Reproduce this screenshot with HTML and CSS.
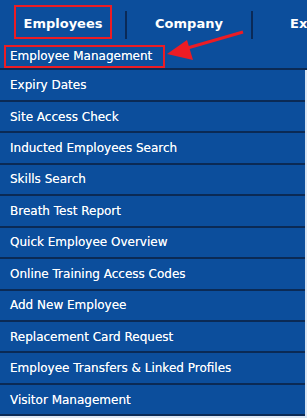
FILE: index.html
```html
<!DOCTYPE html>
<html lang="en">
  <head>
    <meta charset="UTF-8" />
    <meta name="viewport" content="width=device-width, initial-scale=1.0" />
    <title>Employees Menu</title>
    <link rel="stylesheet" href="styles.css">
  </head>
  <body>
    <div class="page">
      <nav class="top-nav">
        <div class="nav-item first active"><span class="nav-label">Employees</span></div>
        <div class="nav-sep"></div>
        <div class="nav-item"><span class="nav-label">Company</span></div>
        <div class="nav-sep"></div>
        <div class="nav-item partial"><span class="nav-label">Ex</span></div>
      </nav>
      <ul class="dropdown">
        <li class="menu-row highlight"><span class="menu-label">Employee Management</span></li>
        <li class="menu-row"><span class="menu-label">Expiry Dates</span></li>
        <li class="menu-row"><span class="menu-label">Site Access Check</span></li>
        <li class="menu-row"><span class="menu-label">Inducted Employees Search</span></li>
        <li class="menu-row"><span class="menu-label">Skills Search</span></li>
        <li class="menu-row"><span class="menu-label">Breath Test Report</span></li>
        <li class="menu-row"><span class="menu-label">Quick Employee Overview</span></li>
        <li class="menu-row"><span class="menu-label">Online Training Access Codes</span></li>
        <li class="menu-row"><span class="menu-label">Add New Employee</span></li>
        <li class="menu-row"><span class="menu-label">Replacement Card Request</span></li>
        <li class="menu-row"><span class="menu-label">Employee Transfers &amp; Linked Profiles</span></li>
        <li class="menu-row"><span class="menu-label">Visitor Management</span></li>
      </ul>
      <!-- annotation arrow -->
      <svg class="callout" width="307" height="418" viewBox="0 0 307 418">
        <line x1="243" y1="32" x2="184" y2="49" stroke="#ec1c24" stroke-width="3" />
        <polygon points="167,54 187,40 193,60" fill="#ec1c24" />
      </svg>
    </div>
  </body>
</html>
```

FILE: styles.css
```css
* {
  margin: 0;
  padding: 0;
  box-sizing: border-box;
}
body {
  background: #dde7f3;
  width: 307px;
  height: 418px;
  overflow: hidden;
  font-family: "DejaVu Sans", Verdana, sans-serif;
  color: #fff;
}
.page {
  position: relative;
  width: 307px;
  height: 418px;
}
.top-nav {
  display: flex;
  align-items: flex-end;
  height: 39px;
  width: 307px;
  overflow: hidden;
  background: #0c4e9c;
}
.nav-item {
  width: 124px;
  flex-shrink: 0;
  height: 34px;
  display: flex;
  justify-content: center;
}
.nav-item.first {
  width: 125px;
}
.nav-item.partial {
  width: 54px;
  justify-content: flex-start;
  padding-left: 35px;
}
.nav-label {
  display: block;
  height: 34px;
  padding: 4px 0 0;
  line-height: 26px;
  font-size: 13px;
  font-weight: bold;
  border: 2px solid transparent;
}
.nav-item.active .nav-label {
  width: 98px;
  margin-left: 1px;
  text-align: center;
  border-color: #ec1c24;
}
.nav-sep {
  flex-shrink: 0;
  width: 2px;
  height: 28px;
  background: #0a2a58;
}
.dropdown {
  list-style: none;
  width: 305px;
}
.menu-row {
  display: flex;
  align-items: center;
  height: 31.45px;
  padding-left: 10px;
  border-bottom: 2px solid #0b2a55;
  background: #0c4e9c;
  font-size: 12px;
  text-shadow: 0 0 0.4px rgba(255, 255, 255, 0.7);
}
.menu-row.highlight {
  width: 307px;
}
.menu-row.highlight .menu-label {
  margin: 5px 0 0 -6px;
  padding: 2px 11px 3px 4px;
  border: 2px solid #ec1c24;
}
.callout {
  position: absolute;
  left: 0;
  top: 0;
  pointer-events: none;
}
```
